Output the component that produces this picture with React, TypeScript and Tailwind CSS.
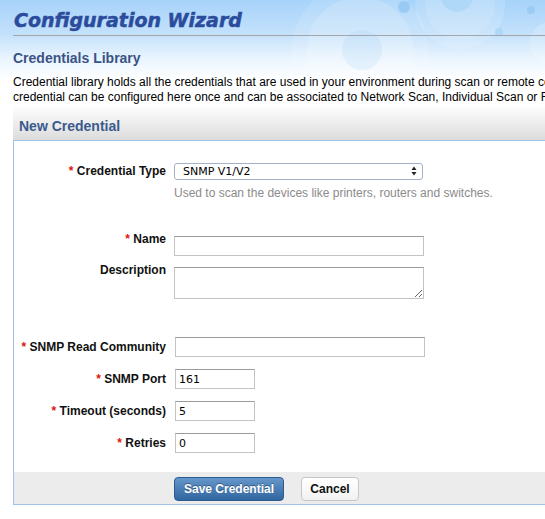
import React from 'react';

const labelCls =
    "w-[152px] shrink-0 text-right text-[12px] leading-[15px] font-bold text-[#111]";
const inputCls =
    "block h-[20px] border border-[#c3c3c3] border-t-[#9b9b9b] bg-white px-[3px] text-[11px] text-black outline-none font-['DejaVu_Sans',Verdana,sans-serif]";

function Req() {
    return <span className="text-[#e0140c]">* </span>;
}

function HeaderDecor() {
    // faint bubble pattern behind the title bar
    return (
        <svg className="pointer-events-none absolute left-0 top-0" width="545" height="130" viewBox="0 0 545 130">
            <circle cx="360" cy="50" r="68" fill="#ffffff" fillOpacity="0.12" />
            <circle cx="360" cy="50" r="53" fill="#ffffff" fillOpacity="0.16" />
            <circle cx="362" cy="50" r="20" fill="#8fc6f3" fillOpacity="0.16" />
            <circle cx="460" cy="4" r="45" fill="#ffffff" fillOpacity="0.14" />
            <circle cx="460" cy="4" r="35" fill="#ffffff" fillOpacity="0.12" />
            <circle cx="457" cy="-4" r="16" fill="#8fc6f3" fillOpacity="0.3" />
            <circle cx="404" cy="7" r="6" fill="#86bff0" fillOpacity="0.6" />
            <circle cx="531" cy="10" r="4" fill="#86bff0" fillOpacity="0.5" />
            <circle cx="499" cy="32" r="4" fill="#86bff0" fillOpacity="0.3" />
            <circle cx="552" cy="43" r="22" fill="#ffffff" fillOpacity="0.18" />
        </svg>
    );
}

function FieldRow({ label, children }: { label: string; children: React.ReactNode }) {
    return (
        <div className="flex items-center">
            <div className={labelCls}>
                <Req />
                {label}
            </div>
            <div className="ml-[9px]">{children}</div>
        </div>
    );
}

export default function App() {
    return (
        <div className="relative h-[519px] w-[545px] overflow-hidden bg-white bg-[linear-gradient(to_bottom,#a7d3fa_0px,#c3e1fb_34px,#e9f4fe_58px,#ffffff_80px)] font-['Liberation_Sans',Arial,sans-serif]">
            <HeaderDecor />
            <div className="relative w-[820px] px-[13px]">
                <h1 className="border-b border-[#a2a6aa] pb-[4px] pl-[1px] pt-[9px] font-['DejaVu_Sans',Verdana,sans-serif] text-[19px] font-bold italic leading-[22px] text-[#2b4c9c] [-webkit-text-stroke:0.5px_#2b4c9c]">
                    Configuration Wizard
                </h1>

                <h2 className="mt-[14px] text-[14px] font-bold leading-[17px] text-[#3a5386]">Credentials Library</h2>
                <p className="mt-[8px] text-[12px] leading-[15px] text-black">
                    Credential library holds all the credentials that are used in your environment during scan or remote connection. A
                    <br />
                    credential can be configured here once and can be associated to Network Scan, Individual Scan or Remote Control.
                </p>

                <div className="h-[35px] bg-[linear-gradient(to_bottom,#ffffff,#dcdcdc)] px-[6px] pt-[13px]">
                    <h3 className="text-[14px] font-bold leading-[17px] text-[#3b5a8e]">New Credential</h3>
                </div>

                <div className="border border-[#9dc3e7]">
                    {/* credential type */}
                    <div className="mt-[22px] flex items-center">
                        <div className={labelCls}>
                            <Req />
                            Credential Type
                        </div>
                        <div className="relative ml-2">
                            <select
                                defaultValue="snmp"
                                className="block h-[17px] w-[249px] appearance-none rounded-[3px] border border-[#a3b2c8] bg-white pl-[8px] font-['DejaVu_Sans',Verdana,sans-serif] text-[11px] leading-[15px] text-black outline-none"
                            >
                                <option value="snmp">SNMP V1/V2</option>
                                <option value="snmp3">SNMP V3</option>
                                <option value="win">Windows</option>
                            </select>
                            <svg className="pointer-events-none absolute right-[6px] top-[3px]" width="6" height="10" viewBox="0 0 6 10">
                                <path d="M0.5 4L3 0.6L5.5 4Z" fill="#222" />
                                <path d="M0.5 6L3 9.4L5.5 6Z" fill="#222" />
                            </svg>
                        </div>
                    </div>
                    <p className="ml-[160px] mt-[6px] text-[12px] leading-[15px] text-[#8b8b8b]">
                        Used to scan the devices like printers, routers and switches.
                    </p>

                    {/* name + description, labels sit at the top */}
                    <div className="mt-[31px] flex items-start">
                        <div className={labelCls}>
                            <Req />
                            Name
                        </div>
                        <input className={`${inputCls} ml-2 mt-[4px] w-[250px]`} />
                    </div>
                    <div className="mt-[7px] flex items-start">
                        <div className={labelCls}>Description</div>
                        <textarea className="ml-2 mt-[4px] block h-[32px] w-[250px] border border-[#c3c3c3] border-t-[#9b9b9b] bg-white outline-none" />
                    </div>

                    <div className="mt-[38px] flex flex-col gap-[12px]">
                        <FieldRow label="SNMP Read Community">
                            <input className={`${inputCls} w-[250px]`} />
                        </FieldRow>
                        <FieldRow label="SNMP Port">
                            <input className={`${inputCls} w-[80px]`} defaultValue="161" />
                        </FieldRow>
                        <FieldRow label="Timeout (seconds)">
                            <input className={`${inputCls} w-[80px]`} defaultValue="5" />
                        </FieldRow>
                        <FieldRow label="Retries">
                            <input className={`${inputCls} w-[80px]`} defaultValue="0" />
                        </FieldRow>
                    </div>

                    <div className="mt-[19px] flex h-[32px] items-start bg-[#ececec] pl-[160px] pt-[5px]">
                        <button className="h-[24px] w-[110px] rounded-[4px] border border-[#2b5a8f] bg-[linear-gradient(to_bottom,#6597ca,#3165a0)] text-[12px] font-bold text-white [text-shadow:0_-1px_0_rgba(0,0,0,0.35)]">
                            Save Credential
                        </button>
                        <button className="ml-[17px] h-[24px] w-[58px] rounded-[4px] border border-[#c6c6c6] bg-[linear-gradient(to_bottom,#ffffff,#f1f1f1)] text-[12px] font-bold text-[#111]">
                            Cancel
                        </button>
                    </div>
                </div>
            </div>
        </div>
    );
}
